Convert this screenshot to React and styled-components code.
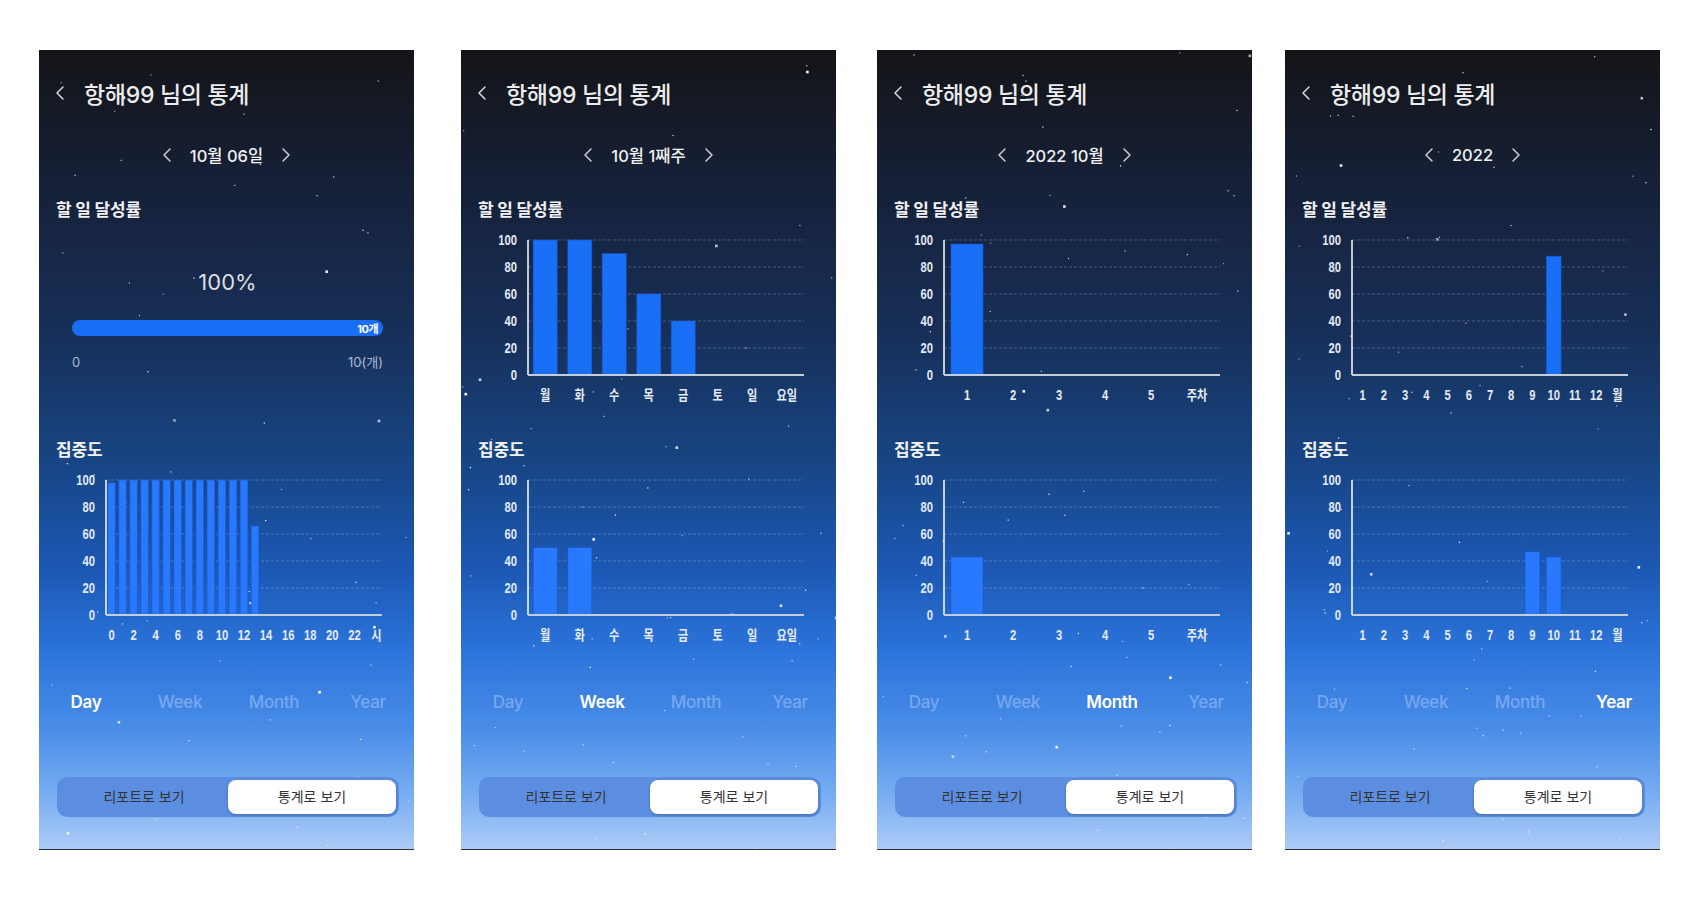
import React from 'react';
import styled, { createGlobalStyle } from 'styled-components';
import { ChevronLeft, ChevronRight } from 'lucide-react';

const GlobalStyle = createGlobalStyle`
  body {
    margin: 0;
    background: #fff;
    font-family: 'Inter', 'Noto Sans CJK KR', sans-serif;
  }
`;

const Page = styled.div`
  display: flex;
  align-items: flex-start;
  padding: 50px 0 0 39px;
`;

const Screen = styled.div`
  position: relative;
  flex: none;
  width: 375px;
  height: 800px;
  box-sizing: border-box;
  margin-left: ${(p) => p.$offset}px;
  border-bottom: 1px solid #2c3038;
  overflow: hidden;
  background: linear-gradient(
    180deg,
    #131417 0%,
    #16213a 18%,
    #172f58 35%,
    #17437f 50%,
    #1c58b4 65%,
    #2b73da 75%,
    #4a8de8 85%,
    #76acf2 93%,
    #adcbf6 100%
  );
`;

const Stars = styled.svg`
  position: absolute;
  inset: 0;
  pointer-events: none;
`;

const Content = styled.div`
  position: relative;
  display: flex;
  flex-direction: column;
  height: 100%;
`;

const Header = styled.div`
  display: flex;
  align-items: center;
  height: 40px;
  margin-top: 23px;
  padding-left: 9px;
  color: #d8d8d8;
`;

const Title = styled.h1`
  margin: 0 0 0 12px;
  font-size: 23px;
  font-weight: 500;
  letter-spacing: -0.3px;
  color: #ececec;
`;

const DateNav = styled.div`
  display: flex;
  justify-content: center;
  align-items: center;
  gap: 11px;
  height: 30px;
  margin-top: 27px;
  color: #f0f0f0;
  font-size: 16.5px;
  font-weight: 500;
  svg {
    color: #c9ccd2;
  }
`;

const SectionTitle = styled.h2`
  margin: 30px 0 0 17px;
  font-size: 17px;
  line-height: 20px;
  font-weight: 700;
  letter-spacing: -0.2px;
  color: #f2f2f2;
`;

const ChartSvg = styled.svg`
  display: block;
  flex: none;
  text {
    font-family: 'Liberation Sans', 'Noto Sans CJK KR', sans-serif;
    font-size: 14px;
    font-weight: 700;
    fill: #e6ebf3;
  }
`;

const Progress = styled.div`
  display: flex;
  flex-direction: column;
  height: 190px;
  padding: 48px 31px 0 33px;
  box-sizing: border-box;
`;

const Percent = styled.div`
  text-align: center;
  font-size: 22px;
  line-height: 28px;
  color: #dedede;
`;

const Track = styled.div`
  display: flex;
  justify-content: flex-end;
  align-items: center;
  height: 16px;
  margin-top: 24px;
  padding-right: 5px;
  border-radius: 8px;
  background: #1a6ef6;
  color: #fff;
  font-size: 11px;
  font-weight: 700;
  letter-spacing: -0.5px;
`;

const Scale = styled.div`
  display: flex;
  justify-content: space-between;
  margin-top: 18px;
  font-size: 13px;
  line-height: 16px;
  color: #aebbd0;
`;

const Tabs = styled.div`
  display: grid;
  grid-template-columns: repeat(4, 94px);
  margin-top: 37px;
  height: 30px;
`;

const Tab = styled.div`
  display: flex;
  justify-content: center;
  align-items: center;
  font-size: 17px;
  font-weight: ${(p) => (p.$active ? 600 : 500)};
  letter-spacing: -0.3px;
  color: ${(p) => (p.$active ? '#ffffff' : 'rgba(190, 215, 255, 0.45)')};
`;

const Segment = styled.div`
  display: flex;
  height: 40px;
  margin: 60px 15px 0 18px;
  padding: 3px;
  box-sizing: border-box;
  border-radius: 10px;
  background: #5b8ee0;
`;

const SegmentItem = styled.div`
  flex: 1;
  display: flex;
  justify-content: center;
  align-items: center;
  padding-bottom: 2px;
  border-radius: 8px;
  font-size: 14px;
  color: #333;
  background: ${(p) => (p.$selected ? '#fff' : 'transparent')};
  box-shadow: ${(p) => (p.$selected ? '0 1px 3px rgba(0,0,0,0.25)' : 'none')};
`;

function makeRandom(seed) {
  let s = seed;
  return () => {
    s = (s * 16807) % 2147483647;
    return (s - 1) / 2147483646;
  };
}

function StarField({ seed }) {
  const rand = makeRandom(seed * 7919 + 13);
  const stars = [];
  for (let i = 0; i < 70; i += 1) {
    const big = rand() < 0.12;
    stars.push({
      x: rand() * 375,
      y: rand() * 800,
      s: big ? 2.6 : 1.2,
      o: 0.55 + rand() * 0.45,
    });
  }
  return (
    <Stars width="375" height="800" viewBox="0 0 375 800">
      {stars.map((st, i) => (
        <rect key={i} x={st.x} y={st.y} width={st.s} height={st.s} fill="#fff" opacity={st.o} />
      ))}
    </Stars>
  );
}

const TICKS = [0, 20, 40, 60, 80, 100];

function ChartText({ x, y, anchor, children }) {
  return (
    <g transform={`translate(${x} ${y}) scale(0.8 1)`}>
      <text x="0" y="0" textAnchor={anchor}>
        {children}
      </text>
    </g>
  );
}

function BarChart({ labels, values, every = 1, color }) {
  const x0 = 67;
  const x1 = 343;
  const top = 20;
  const bottom = 155;
  const h = bottom - top;
  const slot = (x1 - x0) / labels.length;
  return (
    <ChartSvg width="375" height="190" viewBox="0 0 375 190">
      {TICKS.map((t) => {
        const y = bottom - (t / 100) * h;
        return (
          <g key={t}>
            {t > 0 && (
              <line x1={x0} x2={x1} y1={y} y2={y} stroke="rgba(255,255,255,0.22)" strokeDasharray="3 2" />
            )}
            <ChartText x={56} y={y + 5} anchor="end">
              {t}
            </ChartText>
          </g>
        );
      })}
      {values.map((v, i) =>
        v > 0 ? (
          <rect
            key={i}
            x={x0 + slot * i + slot * 0.15}
            y={bottom - (v / 100) * h}
            width={slot * 0.7}
            height={(v / 100) * h}
            fill={color}
            stroke="rgba(20,80,200,0.5)"
            strokeWidth="1"
          />
        ) : null
      )}
      <line x1={x0} y1={top} x2={x0} y2={bottom} stroke="#fff" strokeWidth="1.5" />
      <line x1={x0} y1={bottom} x2={x1} y2={bottom} stroke="#c5cdd9" strokeWidth="2" />
      {labels.map((l, i) =>
        i % every === 0 ? (
          <ChartText key={i} x={x0 + slot * (i + 0.5)} y={180} anchor="middle">
            {l}
          </ChartText>
        ) : null
      )}
    </ChartSvg>
  );
}

const HOURS = [...Array.from({ length: 24 }, (_, i) => String(i)), '시'];
const DAYS = ['월', '화', '수', '목', '금', '토', '일', '요일'];
const WEEKS = ['1', '2', '3', '4', '5', '주차'];
const MONTHS = [...Array.from({ length: 12 }, (_, i) => String(i + 1)), '월'];

const screens = [
  {
    offset: 0,
    date: '10월 06일',
    tab: 'Day',
    focus: { labels: HOURS, every: 2, values: [98, 100, 100, 100, 100, 100, 100, 100, 100, 100, 100, 100, 100, 66] },
  },
  {
    offset: 47,
    date: '10월 1째주',
    tab: 'Week',
    todo: { labels: DAYS, values: [100, 100, 90, 60, 40] },
    focus: { labels: DAYS, values: [50, 50] },
  },
  {
    offset: 41,
    date: '2022 10월',
    tab: 'Month',
    todo: { labels: WEEKS, values: [97] },
    focus: { labels: WEEKS, values: [43] },
  },
  {
    offset: 33,
    date: '2022',
    tab: 'Year',
    todo: { labels: MONTHS, values: [0, 0, 0, 0, 0, 0, 0, 0, 0, 88] },
    focus: { labels: MONTHS, values: [0, 0, 0, 0, 0, 0, 0, 0, 47, 43] },
  },
];

function StatsScreen({ data, index }) {
  return (
    <Screen $offset={data.offset}>
      <StarField seed={index + 1} />
      <Content>
        <Header>
          <ChevronLeft size={24} strokeWidth={1.5} />
          <Title>항해99 님의 통계</Title>
        </Header>
        <DateNav>
          <ChevronLeft size={24} strokeWidth={1.5} />
          <span>{data.date}</span>
          <ChevronRight size={24} strokeWidth={1.5} />
        </DateNav>

        <SectionTitle>할 일 달성률</SectionTitle>
        {data.todo ? (
          <BarChart labels={data.todo.labels} values={data.todo.values} color="#1a6ff7" />
        ) : (
          <Progress>
            <Percent>100%</Percent>
            <Track>10개</Track>
            <Scale>
              <span>0</span>
              <span>10(개)</span>
            </Scale>
          </Progress>
        )}

        <SectionTitle>집중도</SectionTitle>
        <BarChart labels={data.focus.labels} values={data.focus.values} every={data.focus.every} color="#2879fd" />

        <Tabs>
          {['Day', 'Week', 'Month', 'Year'].map((t) => (
            <Tab key={t} $active={t === data.tab}>
              {t}
            </Tab>
          ))}
        </Tabs>

        <Segment>
          <SegmentItem>리포트로 보기</SegmentItem>
          <SegmentItem $selected>통계로 보기</SegmentItem>
        </Segment>
      </Content>
    </Screen>
  );
}

export default function App() {
  return (
    <>
      <GlobalStyle />
      <Page>
        {screens.map((s, i) => (
          <StatsScreen key={s.date} data={s} index={i} />
        ))}
      </Page>
    </>
  );
}
